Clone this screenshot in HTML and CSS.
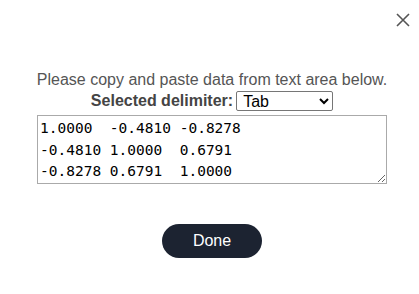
FILE: index.html
```html
<!DOCTYPE html>
<html>
<head>
<meta charset="utf-8">
<link rel="stylesheet" href="styles.css">
</head>
<body>
<div class="modal">
  <button class="close" aria-label="Close">
    <svg width="16" height="16" viewBox="0 0 16 16"><path d="M2 2 L14 14 M14 2 L2 14" stroke="#555" stroke-width="1.6" fill="none"/></svg>
  </button>
  <div class="content">
    <p class="msg">Please copy and paste data from text area below.</p>
    <div class="delim">
      <label class="lbl" for="d">Selected delimiter:</label>
      <select id="d" class="sel"><option>Tab</option><option>Comma</option><option>Space</option></select>
    </div>
    <textarea class="data">1.0000	-0.4810	-0.8278
-0.4810	1.0000	0.6791
-0.8278	0.6791	1.0000</textarea>
    <button class="done">Done</button>
  </div>
</div>
</body>
</html>
```
FILE: styles.css
```css
html, body { margin: 0; padding: 0; background: #fff; }
body { width: 419px; height: 294px; overflow: hidden; font-family: "Liberation Sans", Arial, sans-serif; }
.modal { position: relative; width: 419px; height: 294px; }
.close { position: absolute; top: 12px; right: 8px; width: 16px; height: 16px; padding: 0; border: 0; background: none; }
.close svg { display: block; }
.content { display: flex; flex-direction: column; align-items: center; padding-top: 70px; padding-left: 5px; }
.msg { margin: 0; font-size: 16px; line-height: 20px; color: #555; }
.delim { display: flex; align-items: center; gap: 3px; margin-top: 1px; }
.lbl { font-size: 16px; font-weight: bold; color: #444; }
.sel { width: 97px; height: 20px; font-family: "Liberation Sans", Arial, sans-serif; font-size: 16px; color: #000; border: 1px solid #767676; border-radius: 2px; background: #fff; padding: 0 2px; }
.data { box-sizing: border-box; width: 350px; height: 69px; margin-top: 4px; padding: 2px 2px; font-family: "DejaVu Sans Mono", monospace; font-size: 14.5px; line-height: 21.5px; tab-size: 8; color: #000; border: 1px solid #aaa; resize: both; overflow: hidden; }
.done { margin-top: 40px; width: 100px; height: 34px; border: 0; border-radius: 17px; background: #1c2331; color: #fff; font-family: "Liberation Sans", Arial, sans-serif; font-size: 16px; }
```
